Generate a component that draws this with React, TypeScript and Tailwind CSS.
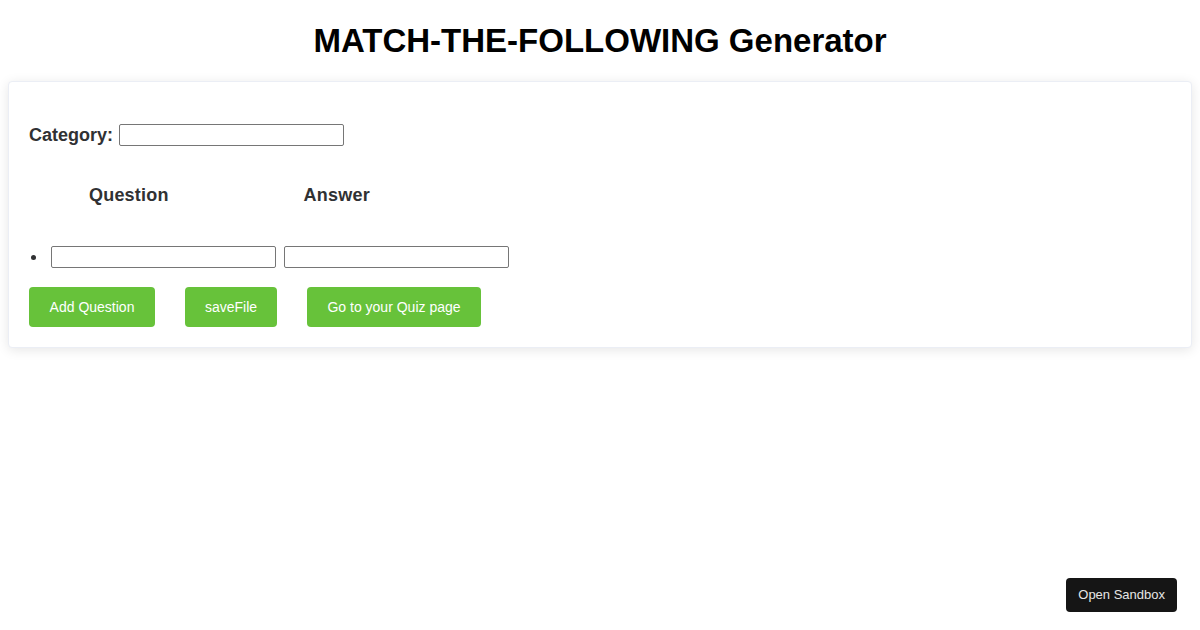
import React from 'react';

const font = { fontFamily: '"Liberation Sans", Arial, sans-serif' };

function Field({ className = '' }: { className?: string }) {
  return (
    <input
      type="text"
      className={`h-[22px] w-[225px] rounded-[2px] border border-[#767676] bg-white px-[2px] text-[13px] outline-none ${className}`}
    />
  );
}

const buttons = [
  { label: 'Add Question', width: 'w-[126px]' },
  { label: 'saveFile', width: 'w-[92px]' },
  { label: 'Go to your Quiz page', width: 'w-[174px]' },
];

export default function App() {
  return (
    <div className="relative h-[630px] w-full overflow-hidden bg-white" style={font}>
      <h1 className="mt-[22px] text-center text-[33px] font-bold leading-[37px] text-black">
        MATCH-THE-FOLLOWING Generator
      </h1>

      <div className="mx-2 mt-[22px] rounded-[4px] border border-[#ebeef5] bg-white p-5 text-[#303133] shadow-[0_2px_12px_0_rgba(0,0,0,0.1)]">
        <div className="mt-[21px] flex h-6 items-center gap-[6px]">
          <span className="text-[18px] font-bold leading-6">Category:</span>
          <Field />
        </div>

        <div className="mt-9 flex h-6 items-center text-[18px] font-bold leading-6 tracking-[0.2px]">
          <span className="ml-[60px]">Question</span>
          <span className="ml-[135px]">Answer</span>
        </div>

        <div className="mt-[39px] flex h-[22px] items-center">
          <span className="ml-[2px] h-[5px] w-[5px] rounded-full bg-[#303133]" />
          <div className="ml-[15px] flex gap-2">
            <Field />
            <Field />
          </div>
        </div>

        <div className="mt-[19px] flex gap-[30px]">
          {buttons.map((b) => (
            <button
              key={b.label}
              className={`h-10 rounded-[4px] bg-[#67c23a] text-[14px] leading-none text-white ${b.width}`}
            >
              {b.label}
            </button>
          ))}
        </div>
      </div>

      <button className="absolute bottom-[18px] right-[23px] h-[34px] rounded-[4px] bg-[#151515] px-3 text-[13px] text-[#e6e6e6]">
        Open Sandbox
      </button>
    </div>
  );
}
